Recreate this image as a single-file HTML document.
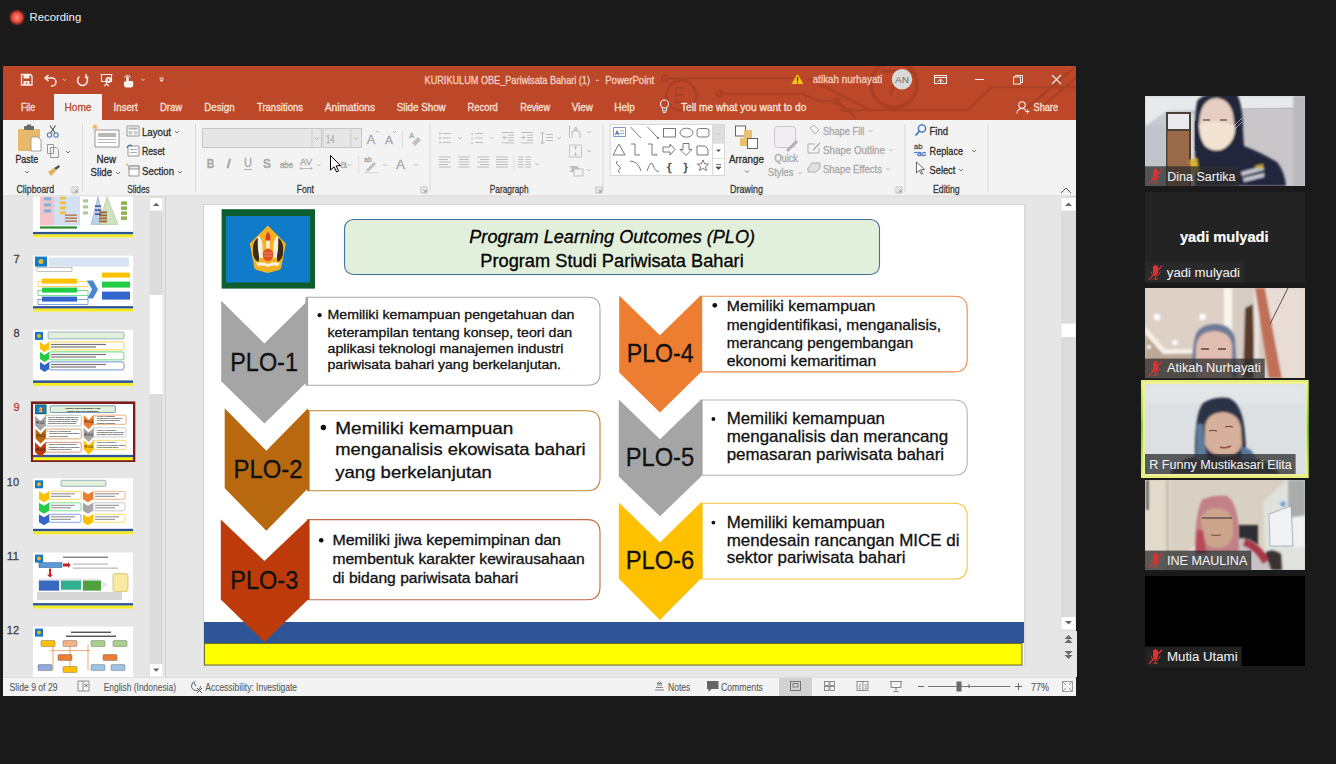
<!DOCTYPE html>
<html><head><meta charset="utf-8"><style>
html,body{margin:0;padding:0;background:#1A1A1A;overflow:hidden;}
svg{display:block;font-family:"Liberation Sans", sans-serif;}
</style></head><body>
<svg width="1336" height="764" viewBox="0 0 1336 764">
<rect x="0" y="0" width="1336" height="764" fill="#1A1A1A" />
<defs><radialGradient id="recg" cx="50%" cy="50%" r="50%"><stop offset="0" stop-color="#FF8A7A"/><stop offset="0.55" stop-color="#E8483A"/><stop offset="0.8" stop-color="#9A2A20" stop-opacity="0.6"/><stop offset="1" stop-color="#1A1A1A" stop-opacity="0"/></radialGradient></defs>
<circle cx="17" cy="17.5" r="9" fill="url(#recg)"/>
<text x="29.6" y="21.0" font-size="11.5" fill="#EDEDED" stroke="#EDEDED" stroke-width="0.05" textLength="51.6" lengthAdjust="spacingAndGlyphs">Recording</text>
<rect x="3" y="66" width="1073" height="630" fill="#E6E6E6" />
<rect x="3" y="66" width="1073" height="54" fill="#BD4829" />
<defs><clipPath id="tbclip"><rect x="3" y="66" width="1073" height="54"/></clipPath></defs>
<g fill="none" stroke="#9E3A20" stroke-width="2.6" opacity="0.55" clip-path="url(#tbclip)">
<path d="M665 78.2 L792 78.2"/>
<circle cx="665" cy="78.2" r="3"/>
<path d="M719.8 93.8 L802.4 93.8 L818.6 101 L836.6 101 L856 118"/>
<circle cx="719.8" cy="93.8" r="3"/><circle cx="836.6" cy="101" r="3"/>
<circle cx="681.2" cy="95.6" r="15" stroke-width="3"/>
<path d="M676 88 h9 M676 88 v14 h9 M676 95 h7" stroke-width="2"/>
<path d="M808 78 L870 110"/>
<circle cx="894" cy="84.5" r="23" stroke-width="4"/>
<path d="M882 71 L900 71 L890 95" stroke-width="3.5"/>
<path d="M840 110 L967 110 L992 87.2 L1076 87.2"/>
<path d="M1027 108 L1076 66"/>
<path d="M1045 104 L1076 78"/>
</g>
<path d="M21.5 74.5 h9 l1.5 1.5 v9 h-10.5 z" fill="none" stroke="#F5F0EE" stroke-width="1.3" />
<rect x="23.5" y="75" width="6" height="3.5" fill="#F5F0EE" />
<rect x="23.5" y="81" width="6" height="4" fill="#F5F0EE" />
<rect x="25.7" y="82.5" width="1.6" height="1.6" fill="#BD4829" />
<path d="M46 78 h6 a4 4 0 0 1 0 8 h-1" fill="none" stroke="#F5F0EE" stroke-width="1.5" />
<path d="M48.5 75 L45 78 L48.5 81" fill="none" stroke="#F5F0EE" stroke-width="1.5" />
<path d="M63 79 l1.5 1.5 l1.5 -1.5" fill="none" stroke="#F5F0EE" stroke-width="0.8" />
<path d="M79.5 76.5 a5 5 0 1 0 6 0" fill="none" stroke="#F5F0EE" stroke-width="1.5" />
<path d="M86.5 74 L85.5 77 L88.5 77.5" fill="none" stroke="#F5F0EE" stroke-width="1.3" />
<path d="M100.5 74.5 h12 M101.5 74.5 v7 h10 v-7 M106.5 81.5 v3 M104 86 l2.5 -2 l2.5 2" fill="none" stroke="#F5F0EE" stroke-width="1.1" />
<circle cx="108.5" cy="80" r="3" fill="#F5F0EE"/>
<path d="M107.8 78.5 l2 1.5 l-2 1.5z" fill="#BD4829" />
<path d="M124.5 77.5 a3.2 3.2 0 0 1 6 0" fill="none" stroke="#F5F0EE" stroke-width="1" />
<rect x="126.2" y="76.5" width="2.6" height="8" fill="#F5F0EE" rx="1.2" />
<path d="M124 81.5 h3 v-0.5 h5 q1.2 0 1.2 1.2 v3 q0 2.3 -2.3 2.3 h-4.6 q-2.3 0 -2.3 -2.3 z" fill="#F5F0EE" />
<path d="M141.5 79 l1.5 1.5 l1.5 -1.5" fill="none" stroke="#F5F0EE" stroke-width="0.8" />
<rect x="159.4" y="77.6" width="4.4" height="0.9" fill="#F5F0EE" />
<path d="M159.4 79.6 h4.4 l-2.2 2.4z" fill="#F5F0EE" />
<text x="424.6" y="83.9" font-size="11.2" fill="#F7D2C2" stroke="#F7D2C2" stroke-width="0.3" textLength="165.4" lengthAdjust="spacingAndGlyphs">KURIKULUM OBE_Pariwisata Bahari (1)</text>
<rect x="595.9" y="79.8" width="3" height="1" fill="#F7D2C2" />
<text x="605.2" y="83.9" font-size="11.2" fill="#F7D2C2" stroke="#F7D2C2" stroke-width="0.3" textLength="49.1" lengthAdjust="spacingAndGlyphs">PowerPoint</text>
<path d="M797.5 74 L803.5 84 L791.5 84 Z" fill="#F5C518" />
<rect x="796.9" y="77" width="1.2" height="4" fill="#3a2a00" />
<rect x="796.9" y="82" width="1.2" height="1.1" fill="#3a2a00" />
<text x="812.8" y="83.2" font-size="11.2" fill="#F7D2C2" stroke="#F7D2C2" stroke-width="0.3" textLength="69.5" lengthAdjust="spacingAndGlyphs">atikah nurhayati</text>
<circle cx="902" cy="79.3" r="10.2" fill="#D9D9D9"/>
<text x="902.0" y="83.0" font-size="9.5" fill="#6A6A6A" stroke="#6A6A6A" stroke-width="0.01" textLength="14.0" lengthAdjust="spacingAndGlyphs" text-anchor="middle">AN</text>
<rect x="934.5" y="75.5" width="12" height="8" fill="none" stroke="#F5F0EE" stroke-width="1" />
<path d="M934.5 77.5 h12" fill="none" stroke="#F5F0EE" stroke-width="1" />
<path d="M937.5 82 l3 -3 l3 3 M940.5 79 v4" fill="none" stroke="#F5F0EE" stroke-width="1" />
<path d="M975 79.5 h9" fill="none" stroke="#F5F0EE" stroke-width="1" />
<rect x="1013.5" y="77" width="7" height="7" fill="none" stroke="#F5F0EE" stroke-width="1" />
<path d="M1015.5 77 v-1.5 h7 v7 h-1.5" fill="none" stroke="#F5F0EE" stroke-width="1" />
<path d="M1052 75 l9 9 M1061 75 l-9 9" fill="none" stroke="#F5F0EE" stroke-width="1.1" />
<rect x="54" y="94" width="48" height="26" fill="#F3F3F3" />
<text x="21.0" y="110.5" font-size="11.2" fill="#FBE3DA" stroke="#FBE3DA" stroke-width="0.3" textLength="14.0" lengthAdjust="spacingAndGlyphs">File</text>
<text x="64.5" y="110.5" font-size="11.2" fill="#B9462A" stroke="#B9462A" stroke-width="0.3" textLength="27.0" lengthAdjust="spacingAndGlyphs">Home</text>
<text x="113.6" y="110.5" font-size="11.2" fill="#FBE3DA" stroke="#FBE3DA" stroke-width="0.3" textLength="24.1" lengthAdjust="spacingAndGlyphs">Insert</text>
<text x="160.0" y="110.5" font-size="11.2" fill="#FBE3DA" stroke="#FBE3DA" stroke-width="0.3" textLength="22.0" lengthAdjust="spacingAndGlyphs">Draw</text>
<text x="204.3" y="110.5" font-size="11.2" fill="#FBE3DA" stroke="#FBE3DA" stroke-width="0.3" textLength="30.3" lengthAdjust="spacingAndGlyphs">Design</text>
<text x="257.0" y="110.5" font-size="11.2" fill="#FBE3DA" stroke="#FBE3DA" stroke-width="0.3" textLength="46.0" lengthAdjust="spacingAndGlyphs">Transitions</text>
<text x="324.8" y="110.5" font-size="11.2" fill="#FBE3DA" stroke="#FBE3DA" stroke-width="0.3" textLength="50.2" lengthAdjust="spacingAndGlyphs">Animations</text>
<text x="396.7" y="110.5" font-size="11.2" fill="#FBE3DA" stroke="#FBE3DA" stroke-width="0.3" textLength="49.0" lengthAdjust="spacingAndGlyphs">Slide Show</text>
<text x="467.6" y="110.5" font-size="11.2" fill="#FBE3DA" stroke="#FBE3DA" stroke-width="0.3" textLength="30.1" lengthAdjust="spacingAndGlyphs">Record</text>
<text x="520.2" y="110.5" font-size="11.2" fill="#FBE3DA" stroke="#FBE3DA" stroke-width="0.3" textLength="29.8" lengthAdjust="spacingAndGlyphs">Review</text>
<text x="571.7" y="110.5" font-size="11.2" fill="#FBE3DA" stroke="#FBE3DA" stroke-width="0.3" textLength="21.0" lengthAdjust="spacingAndGlyphs">View</text>
<text x="614.3" y="110.5" font-size="11.2" fill="#FBE3DA" stroke="#FBE3DA" stroke-width="0.3" textLength="20.5" lengthAdjust="spacingAndGlyphs">Help</text>
<circle cx="664.5" cy="104" r="4" fill="none" stroke="#F5F0EE" stroke-width="1.1"/>
<path d="M662.5 108 v3 h4 v-3 M663 112.5 h3" fill="none" stroke="#F5F0EE" stroke-width="1" />
<text x="681.0" y="110.5" font-size="11.2" fill="#FBE3DA" stroke="#FBE3DA" stroke-width="0.3" textLength="125.3" lengthAdjust="spacingAndGlyphs">Tell me what you want to do</text>
<circle cx="1022" cy="105" r="3.2" fill="none" stroke="#F5F0EE" stroke-width="1.1"/>
<path d="M1017 113.5 a5 5 0 0 1 9 -3 M1025.5 111.5 h4 M1027.5 109.5 v4" fill="none" stroke="#F5F0EE" stroke-width="1.1" />
<text x="1033.6" y="110.5" font-size="11.2" fill="#FBE3DA" stroke="#FBE3DA" stroke-width="0.3" textLength="24.4" lengthAdjust="spacingAndGlyphs">Share</text>
<rect x="3" y="120" width="1073" height="76" fill="#F3F3F3" />
<rect x="3" y="195.5" width="1073" height="1" fill="#D4D4D4" />
<rect x="82" y="124" width="1" height="68" fill="#D9D9D9" />
<rect x="195" y="124" width="1" height="68" fill="#D9D9D9" />
<rect x="429.5" y="124" width="1" height="68" fill="#D9D9D9" />
<rect x="602.5" y="124" width="1" height="68" fill="#D9D9D9" />
<rect x="904.4" y="124" width="1" height="68" fill="#D9D9D9" />
<rect x="987.5" y="124" width="1" height="68" fill="#D9D9D9" />
<path d="M18 129 h22 v22 h-22 z" fill="#E8B96A" />
<rect x="24" y="126" width="10" height="4" fill="#6A6A6A" rx="1" />
<rect x="27" y="124.5" width="4" height="3" fill="#6A6A6A" />
<path d="M31 137 h7 l3 3 v11 h-10 z" fill="#FFFFFF" stroke="#8A8A8A" stroke-width="0.8" />
<text x="15.4" y="163.0" font-size="11.2" fill="#2B2B2B" stroke="#2B2B2B" stroke-width="0.3" textLength="22.8" lengthAdjust="spacingAndGlyphs">Paste</text>
<path d="M25 171 l2 2 l2 -2" fill="none" stroke="#666" stroke-width="0.9" />
<g fill="none" stroke="#4A7EBB" stroke-width="1.1"><circle cx="49.5" cy="135" r="2.2"/><circle cx="56" cy="135" r="2.2"/></g>
<path d="M50.5 133 L55.5 125.5 M55 133 L50 125.5" fill="none" stroke="#555" stroke-width="1.1" />
<path d="M47.5 144.5 h6 v9 h-6 z M50.5 147.5 h6 l2 2 v8 h-8 z" fill="#F3F3F3" stroke="#8E8E8E" stroke-width="0.9" />
<path d="M66 151 l2 2 l2 -2" fill="none" stroke="#666" stroke-width="0.9" />
<path d="M48 172 l6 -4 l2 3 l-5 5 z" fill="#E0B05A" />
<path d="M54 168 l5 -3 l1 2 l-4 3 z" fill="#555" />
<text x="16.5" y="192.6" font-size="11" fill="#3B3B3B" stroke="#3B3B3B" stroke-width="0.3" textLength="37.7" lengthAdjust="spacingAndGlyphs">Clipboard</text>
<path d="M72 187 h6 v6 h-6 z" fill="none" stroke="#B0B0B0" stroke-width="0.8" />
<path d="M74 189 l3 3 m0 -2.5 v2.5 h-2.5" fill="none" stroke="#8A8A8A" stroke-width="0.8" />
<path d="M95 130 h24 v17 h-24 z" fill="#FFFFFF" stroke="#8A8A8A" stroke-width="0.9" />
<rect x="98" y="133" width="18" height="4" fill="#B8B8B8" />
<rect x="98" y="139" width="18" height="1" fill="#B8B8B8" />
<rect x="98" y="142" width="18" height="1" fill="#B8B8B8" />
<path d="M95 124 l0 6 M92 127 h6 M93 125 l4 4 M97 125 l-4 4" fill="none" stroke="#F0B040" stroke-width="0.9" />
<text x="96.5" y="163.0" font-size="11.2" fill="#2B2B2B" stroke="#2B2B2B" stroke-width="0.3" textLength="19.5" lengthAdjust="spacingAndGlyphs">New</text>
<text x="90.6" y="176.4" font-size="11.2" fill="#2B2B2B" stroke="#2B2B2B" stroke-width="0.3" textLength="21.4" lengthAdjust="spacingAndGlyphs">Slide</text>
<path d="M116 172 l2 2 l2 -2" fill="none" stroke="#666" stroke-width="0.9" />
<path d="M127 126 h12 v10 h-12 z" fill="#FFFFFF" stroke="#8A8A8A" stroke-width="0.9" />
<rect x="128.5" y="127.5" width="9" height="2" fill="#B0B0B0" />
<rect x="128.5" y="131" width="4" height="3.5" fill="#C8C8C8" />
<rect x="134" y="131" width="3.5" height="3.5" fill="#C8C8C8" />
<text x="142.0" y="135.5" font-size="11.2" fill="#2B2B2B" stroke="#2B2B2B" stroke-width="0.3" textLength="29.0" lengthAdjust="spacingAndGlyphs">Layout</text>
<path d="M175 131 l2 2 l2 -2" fill="none" stroke="#666" stroke-width="0.9" />
<path d="M128 146 h11 v10 h-11 z" fill="#FFFFFF" stroke="#8A8A8A" stroke-width="0.9" />
<rect x="130" y="149" width="7" height="1" fill="#AAA" />
<rect x="130" y="152" width="7" height="1" fill="#AAA" />
<path d="M127 148 a3 3 0 0 1 5 -2" fill="none" stroke="#2F6FC0" stroke-width="1.2" />
<text x="142.0" y="155.0" font-size="11.2" fill="#2B2B2B" stroke="#2B2B2B" stroke-width="0.3" textLength="22.7" lengthAdjust="spacingAndGlyphs">Reset</text>
<path d="M129 166 h10 v10 h-10 z" fill="#FFFFFF" stroke="#8A8A8A" stroke-width="0.9" />
<rect x="129" y="166" width="10" height="3" fill="#E9E9E9" stroke="#8A8A8A" stroke-width="0.9" />
<path d="M126 164 l2 2 M127 163 v3" fill="none" stroke="#F0B040" stroke-width="0.8" />
<text x="142.0" y="175.0" font-size="11.2" fill="#2B2B2B" stroke="#2B2B2B" stroke-width="0.3" textLength="32.0" lengthAdjust="spacingAndGlyphs">Section</text>
<path d="M178 171 l2 2 l2 -2" fill="none" stroke="#666" stroke-width="0.9" />
<text x="127.2" y="192.6" font-size="11" fill="#3B3B3B" stroke="#3B3B3B" stroke-width="0.3" textLength="22.5" lengthAdjust="spacingAndGlyphs">Slides</text>
<rect x="202.5" y="128.5" width="119" height="19" fill="#E6E6E6" stroke="#C4C4C4" stroke-width="0.9" />
<rect x="311.6" y="129" width="0.8" height="18" fill="#C4C4C4" />
<path d="M314.5 137.5 l2 2 l2 -2" fill="none" stroke="#B0B0B0" stroke-width="0.9" />
<rect x="323" y="128.5" width="38.6" height="19" fill="#E6E6E6" stroke="#C4C4C4" stroke-width="0.9" />
<rect x="350.5" y="129" width="0.8" height="18" fill="#C4C4C4" />
<path d="M354 137.5 l2 2 l2 -2" fill="none" stroke="#B0B0B0" stroke-width="0.9" />
<text x="326.0" y="142.5" font-size="11" fill="#B0B0B0" stroke="#B0B0B0" stroke-width="0.3" textLength="8.5" lengthAdjust="spacingAndGlyphs">14</text>
<text x="366.8" y="144.0" font-size="13" fill="#A8A8A8" stroke="#A8A8A8" stroke-width="0.3" textLength="8.5" lengthAdjust="spacingAndGlyphs">A</text>
<path d="M376 132.5 l1.5 -1.5 l1.5 1.5" fill="none" stroke="#A8A8A8" stroke-width="0.9" />
<text x="385.0" y="144.0" font-size="11" fill="#A8A8A8" stroke="#A8A8A8" stroke-width="0.3" textLength="8.0" lengthAdjust="spacingAndGlyphs">A</text>
<path d="M393 131 l1.5 1.5 l1.5 -1.5" fill="none" stroke="#A8A8A8" stroke-width="0.9" />
<rect x="402" y="130" width="0.8" height="18" fill="#DADADA" />
<text x="409.0" y="138.0" font-size="8" fill="#A8A8A8" stroke="#A8A8A8" stroke-width="0.3">A</text>
<path d="M412 143 l6 -6 l3 3 l-6 6 z" fill="#C0C0C0" />
<text x="206.8" y="168.0" font-size="12" fill="#A8A8A8" stroke="#A8A8A8" stroke-width="0.3" textLength="7.5" lengthAdjust="spacingAndGlyphs" font-weight="bold">B</text>
<text x="226.0" y="168.0" font-size="12" fill="#A8A8A8" stroke="#A8A8A8" stroke-width="0.3" textLength="5.0" lengthAdjust="spacingAndGlyphs" font-style="italic">I</text>
<text x="244.0" y="167.0" font-size="12" fill="#A8A8A8" stroke="#A8A8A8" stroke-width="0.3" textLength="8.0" lengthAdjust="spacingAndGlyphs">U</text>
<rect x="244" y="169" width="8" height="0.9" fill="#A8A8A8" />
<text x="263.0" y="168.0" font-size="12" fill="#A8A8A8" stroke="#A8A8A8" stroke-width="0.3" textLength="8.0" lengthAdjust="spacingAndGlyphs" font-weight="bold">S</text>
<text x="280.0" y="167.5" font-size="9.5" fill="#A8A8A8" stroke="#A8A8A8" stroke-width="0.3" textLength="13.0" lengthAdjust="spacingAndGlyphs">abe</text>
<rect x="280" y="164" width="13" height="0.8" fill="#A8A8A8" />
<text x="300.0" y="165.0" font-size="9.5" fill="#A8A8A8" stroke="#A8A8A8" stroke-width="0.3" textLength="12.0" lengthAdjust="spacingAndGlyphs">AV</text>
<path d="M300 168.5 h12 M301.5 167 l-1.5 1.5 l1.5 1.5 M310.5 167 l1.5 1.5 l-1.5 1.5" fill="none" stroke="#A8A8A8" stroke-width="0.8" />
<path d="M316.5 164 l2 2 l2 -2" fill="none" stroke="#B8B8B8" stroke-width="0.9" />
<text x="340.0" y="168.0" font-size="11" fill="#A8A8A8" stroke="#A8A8A8" stroke-width="0.3" textLength="7.0" lengthAdjust="spacingAndGlyphs">a</text>
<path d="M347.5 164 l2 2 l2 -2" fill="none" stroke="#B8B8B8" stroke-width="0.9" />
<rect x="358.4" y="156" width="0.8" height="18" fill="#DADADA" />
<text x="364.0" y="162.0" font-size="7" fill="#A8A8A8" stroke="#A8A8A8" stroke-width="0.3" textLength="8.0" lengthAdjust="spacingAndGlyphs">ab</text>
<path d="M366 170 l8 -8 l2 2 l-8 8 z" fill="#BDBDBD" />
<rect x="364" y="172" width="14" height="1.2" fill="#D8D8D8" />
<path d="M383 164 l2 2 l2 -2" fill="none" stroke="#B8B8B8" stroke-width="0.9" />
<text x="396.0" y="169.0" font-size="13" fill="#A8A8A8" stroke="#A8A8A8" stroke-width="0.3" textLength="9.0" lengthAdjust="spacingAndGlyphs">A</text>
<path d="M414 164 l2 2 l2 -2" fill="none" stroke="#B8B8B8" stroke-width="0.9" />
<text x="296.7" y="192.6" font-size="11" fill="#3B3B3B" stroke="#3B3B3B" stroke-width="0.3" textLength="17.2" lengthAdjust="spacingAndGlyphs">Font</text>
<path d="M421 187 h6 v6 h-6 z" fill="none" stroke="#B0B0B0" stroke-width="0.8" />
<path d="M423 189 l3 3 m0 -2.5 v2.5 h-2.5" fill="none" stroke="#8A8A8A" stroke-width="0.8" />
<path d="M330.5 155.5 L330.5 170 L334 166.8 L336.6 172 L338.6 171 L336 166 L340.5 165.5 Z" fill="#FFFFFF" stroke="#000" stroke-width="1" />
<circle cx="440.0" cy="133.5" r="1.1" fill="#BDBDBD"/>
<rect x="442.5" y="133.0" width="8" height="1" fill="#BDBDBD" />
<circle cx="440.0" cy="138.0" r="1.1" fill="#BDBDBD"/>
<rect x="442.5" y="137.5" width="8" height="1" fill="#BDBDBD" />
<circle cx="440.0" cy="142.5" r="1.1" fill="#BDBDBD"/>
<rect x="442.5" y="142.0" width="8" height="1" fill="#BDBDBD" />
<path d="M458 137 l2 2 l2 -2" fill="none" stroke="#B8B8B8" stroke-width="0.9" />
<rect x="471.5" y="133.0" width="1.2" height="2" fill="#BDBDBD" />
<rect x="475" y="133.0" width="8" height="1" fill="#BDBDBD" />
<rect x="471.5" y="137.5" width="1.2" height="2" fill="#BDBDBD" />
<rect x="475" y="137.5" width="8" height="1" fill="#BDBDBD" />
<rect x="471.5" y="142.0" width="1.2" height="2" fill="#BDBDBD" />
<rect x="475" y="142.0" width="8" height="1" fill="#BDBDBD" />
<path d="M489.5 137 l2 2 l2 -2" fill="none" stroke="#B8B8B8" stroke-width="0.9" />
<rect x="502" y="132.0" width="12" height="1" fill="#BDBDBD" />
<rect x="508" y="134.6" width="6" height="1" fill="#BDBDBD" />
<rect x="508" y="137.2" width="6" height="1" fill="#BDBDBD" />
<rect x="508" y="139.8" width="6" height="1" fill="#BDBDBD" />
<rect x="502" y="142.4" width="12" height="1" fill="#BDBDBD" />
<path d="M507 137.5 l-4 0 m2 -2 l-2 2 l2 2" fill="none" stroke="#BDBDBD" stroke-width="1" />
<rect x="521" y="132.0" width="12" height="1" fill="#BDBDBD" />
<rect x="527" y="134.6" width="6" height="1" fill="#BDBDBD" />
<rect x="527" y="137.2" width="6" height="1" fill="#BDBDBD" />
<rect x="527" y="139.8" width="6" height="1" fill="#BDBDBD" />
<rect x="521" y="142.4" width="12" height="1" fill="#BDBDBD" />
<path d="M521 137.5 l4 0 m-2 -2 l2 2 l-2 2" fill="none" stroke="#BDBDBD" stroke-width="1" />
<path d="M542.5 132 v12 M540.5 134 l2 -2 l2 2 M540.5 142 l2 2 l2 -2" fill="none" stroke="#BDBDBD" stroke-width="1" />
<rect x="546" y="134" width="7" height="1" fill="#BDBDBD" />
<rect x="546" y="137" width="7" height="1" fill="#BDBDBD" />
<rect x="546" y="140" width="7" height="1" fill="#BDBDBD" />
<path d="M557 137 l2 2 l2 -2" fill="none" stroke="#B8B8B8" stroke-width="0.9" />
<text x="573.0" y="131.5" font-size="8" fill="#BDBDBD" stroke="#BDBDBD" stroke-width="0.3">A</text>
<path d="M569.5 126 v12 M572 131 v7 M580 131 v7" fill="none" stroke="#BDBDBD" stroke-width="1" />
<path d="M587 131 l2 2 l2 -2" fill="none" stroke="#B8B8B8" stroke-width="0.9" />
<rect x="439" y="156.5" width="12" height="1" fill="#BDBDBD" />
<rect x="439" y="159.0" width="9" height="1" fill="#BDBDBD" />
<rect x="439" y="161.5" width="12" height="1" fill="#BDBDBD" />
<rect x="439" y="164.0" width="9" height="1" fill="#BDBDBD" />
<rect x="439" y="166.5" width="12" height="1" fill="#BDBDBD" />
<rect x="458.0" y="156.5" width="12" height="1" fill="#BDBDBD" />
<rect x="459.5" y="159.0" width="9" height="1" fill="#BDBDBD" />
<rect x="458.0" y="161.5" width="12" height="1" fill="#BDBDBD" />
<rect x="459.5" y="164.0" width="9" height="1" fill="#BDBDBD" />
<rect x="458.0" y="166.5" width="12" height="1" fill="#BDBDBD" />
<rect x="477" y="156.5" width="12" height="1" fill="#BDBDBD" />
<rect x="480" y="159.0" width="9" height="1" fill="#BDBDBD" />
<rect x="477" y="161.5" width="12" height="1" fill="#BDBDBD" />
<rect x="480" y="164.0" width="9" height="1" fill="#BDBDBD" />
<rect x="477" y="166.5" width="12" height="1" fill="#BDBDBD" />
<rect x="496" y="156.5" width="12" height="1" fill="#BDBDBD" />
<rect x="496" y="159.0" width="12" height="1" fill="#BDBDBD" />
<rect x="496" y="161.5" width="12" height="1" fill="#BDBDBD" />
<rect x="496" y="164.0" width="12" height="1" fill="#BDBDBD" />
<rect x="496" y="166.5" width="12" height="1" fill="#BDBDBD" />
<rect x="513.5" y="155" width="0.8" height="17" fill="#DADADA" />
<rect x="518" y="156.5" width="5.5" height="1" fill="#BDBDBD" />
<rect x="525.5" y="156.5" width="5.5" height="1" fill="#BDBDBD" />
<rect x="518" y="159.0" width="5.5" height="1" fill="#BDBDBD" />
<rect x="525.5" y="159.0" width="5.5" height="1" fill="#BDBDBD" />
<rect x="518" y="161.5" width="5.5" height="1" fill="#BDBDBD" />
<rect x="525.5" y="161.5" width="5.5" height="1" fill="#BDBDBD" />
<rect x="518" y="164.0" width="5.5" height="1" fill="#BDBDBD" />
<rect x="525.5" y="164.0" width="5.5" height="1" fill="#BDBDBD" />
<rect x="518" y="166.5" width="5.5" height="1" fill="#BDBDBD" />
<rect x="525.5" y="166.5" width="5.5" height="1" fill="#BDBDBD" />
<path d="M535 163 l2 2 l2 -2" fill="none" stroke="#B8B8B8" stroke-width="0.9" />
<path d="M569.5 145 h12 v12 h-12 z" fill="none" stroke="#BDBDBD" stroke-width="0.9" />
<path d="M575.5 146 v4 m-2 -2 l2 -2 l2 2 M575.5 156 v-4 m-2 2 l2 2 l2 -2" fill="none" stroke="#BDBDBD" stroke-width="0.9" />
<path d="M587 150 l2 2 l2 -2" fill="none" stroke="#B8B8B8" stroke-width="0.9" />
<path d="M569 166 h8 l3 3 l-3 3 h-8 l3 -3 z" fill="#BDBDBD" />
<rect x="574" y="169" width="9" height="7" fill="#F3F3F3" stroke="#BDBDBD" stroke-width="0.9" />
<path d="M587 169 l2 2 l2 -2" fill="none" stroke="#B8B8B8" stroke-width="0.9" />
<text x="489.7" y="192.6" font-size="11" fill="#3B3B3B" stroke="#3B3B3B" stroke-width="0.3" textLength="38.9" lengthAdjust="spacingAndGlyphs">Paragraph</text>
<path d="M596 187 h6 v6 h-6 z" fill="none" stroke="#B0B0B0" stroke-width="0.8" />
<path d="M598 189 l3 3 m0 -2.5 v2.5 h-2.5" fill="none" stroke="#8A8A8A" stroke-width="0.8" />
<rect x="610.2" y="124.5" width="114.3" height="50.9" fill="#FFFFFF" stroke="#D4D4D4" stroke-width="0.9" />
<rect x="712.6" y="124.5" width="11.9" height="50.9" fill="#FFFFFF" stroke="#D4D4D4" stroke-width="0.9" />
<rect x="713" y="125" width="11" height="18" fill="#DEDEDE" />
<rect x="712.6" y="143" width="11.9" height="0.8" fill="#E0E0E0" />
<rect x="712.6" y="158" width="11.9" height="0.8" fill="#D4D4D4" />
<rect x="716.5" y="133.5" width="4" height="0.8" fill="#BBBBBB" />
<path d="M716 149.5 l2.5 2.5 l2.5 -2.5 z" fill="#555" />
<path d="M716 164.5 h5 M716 167 l2.5 2.5 l2.5 -2.5 z" fill="#555" stroke="#555" stroke-width="0.8" />
<path d="M613.5 127.5 h12 v9 h-12 z" fill="#FFFFFF" stroke="#6E8FC0" stroke-width="0.9" />
<text x="615.0" y="134.5" font-size="6" fill="#2F5597" stroke="#2F5597" stroke-width="0.3">A</text>
<rect x="620" y="130.5" width="4" height="0.8" fill="#999" />
<rect x="620" y="133" width="4" height="0.8" fill="#999" />
<path d="M630.5 127 L641 138" fill="none" stroke="#6A6A6A" stroke-width="0.9" />
<path d="M647.5 127 L657.5 137.5" fill="none" stroke="#6A6A6A" stroke-width="0.9" />
<circle cx="658" cy="138" r="0.9" fill="#444"/>
<rect x="663.5" y="128.5" width="12" height="8.5" fill="none" stroke="#6A6A6A" stroke-width="0.9" />
<ellipse cx="686.5" cy="132.7" rx="6.5" ry="4.5" fill="none" stroke="#6A6A6A" stroke-width="0.9"/>
<rect x="697" y="128.5" width="12" height="8.5" fill="none" stroke="#6A6A6A" stroke-width="0.9" rx="2.5" />
<path d="M619 144 L625 155 L613 155 Z" fill="none" stroke="#6A6A6A" stroke-width="0.9" />
<path d="M631 144 h4 v11 h5" fill="none" stroke="#6A6A6A" stroke-width="0.9" />
<path d="M648 144 h4 v11 h5 l-1.5 -1.5" fill="none" stroke="#6A6A6A" stroke-width="0.9" />
<path d="M663 147 h7 v-3 l5 5.5 l-5 5.5 v-3 h-7 z" fill="none" stroke="#6A6A6A" stroke-width="0.9" />
<path d="M683 143.5 h6 v6 h3 l-6 6 l-6 -6 h3 z" fill="none" stroke="#6A6A6A" stroke-width="0.9" />
<path d="M697 146 h5 a5 5 0 0 1 6 5 v4 h-11 z" fill="none" stroke="#6A6A6A" stroke-width="0.9" />
<path d="M617 161 q-2 3 2 5 q3 2 0 4 q-2 1 1 3" fill="none" stroke="#6A6A6A" stroke-width="0.9" />
<path d="M630 161 q8 0 11 10" fill="none" stroke="#6A6A6A" stroke-width="0.9" />
<path d="M647 171 q4 -12 6 -6 q3 8 6 6" fill="none" stroke="#6A6A6A" stroke-width="0.9" />
<text x="667.0" y="170.5" font-size="11" fill="#444" stroke="#444" stroke-width="0.3" textLength="4.5" lengthAdjust="spacingAndGlyphs">{</text>
<text x="683.5" y="170.5" font-size="11" fill="#444" stroke="#444" stroke-width="0.3" textLength="4.5" lengthAdjust="spacingAndGlyphs">}</text>
<path d="M703 160 l1.6 3.8 l4 0.3 l-3.1 2.6 l1 3.9 l-3.5 -2.2 l-3.5 2.2 l1 -3.9 l-3.1 -2.6 l4 -0.3 z" fill="none" stroke="#6A6A6A" stroke-width="0.9" />
<rect x="735.5" y="126" width="10" height="10" fill="#FFFFFF" stroke="#555" stroke-width="0.9" />
<rect x="744" y="130" width="8" height="8" fill="#E8C070" />
<rect x="740" y="138" width="8" height="8" fill="#E8C070" />
<rect x="747.5" y="138.5" width="10" height="10" fill="#FFFFFF" stroke="#555" stroke-width="0.9" />
<text x="729.0" y="162.7" font-size="11.2" fill="#2B2B2B" stroke="#2B2B2B" stroke-width="0.3" textLength="35.0" lengthAdjust="spacingAndGlyphs">Arrange</text>
<path d="M745 170.5 l2 2 l2 -2" fill="none" stroke="#666" stroke-width="0.9" />
<rect x="774.5" y="126.5" width="21" height="21" fill="#F2EDF2" stroke="#C8C0C8" stroke-width="0.9" rx="3" />
<path d="M786 150 l10 -10 l2 2 l-10 10 z" fill="#B0B0B0" />
<text x="774.4" y="162.3" font-size="11" fill="#A8A8A8" stroke="#A8A8A8" stroke-width="0.3" textLength="23.6" lengthAdjust="spacingAndGlyphs">Quick</text>
<text x="768.0" y="176.3" font-size="11" fill="#A8A8A8" stroke="#A8A8A8" stroke-width="0.3" textLength="25.5" lengthAdjust="spacingAndGlyphs">Styles</text>
<path d="M798 172 l2 2 l2 -2" fill="none" stroke="#B8B8B8" stroke-width="0.9" />
<path d="M810 128 l4 -3 l5 5 l-4 4 z" fill="none" stroke="#A8A8A8" stroke-width="0.9" />
<text x="823.0" y="135.0" font-size="10.8" fill="#A8A8A8" stroke="#A8A8A8" stroke-width="0.3" textLength="41.4" lengthAdjust="spacingAndGlyphs">Shape Fill</text>
<path d="M868.5 130 l2 2 l2 -2" fill="none" stroke="#B8B8B8" stroke-width="0.9" />
<path d="M808 144 h7 M808 144 v9 h11 v-5" fill="none" stroke="#A8A8A8" stroke-width="0.9" />
<path d="M813 150 l7 -7" fill="none" stroke="#A8A8A8" stroke-width="1.2" />
<text x="823.0" y="154.0" font-size="10.8" fill="#A8A8A8" stroke="#A8A8A8" stroke-width="0.3" textLength="62.0" lengthAdjust="spacingAndGlyphs">Shape Outline</text>
<path d="M889 149 l2 2 l2 -2" fill="none" stroke="#B8B8B8" stroke-width="0.9" />
<path d="M808 168 l4 -5 h8 v5 l-4 4 h-8 z" fill="#E0E0E0" stroke="#A8A8A8" stroke-width="0.9" />
<text x="823.0" y="173.0" font-size="10.8" fill="#A8A8A8" stroke="#A8A8A8" stroke-width="0.3" textLength="59.0" lengthAdjust="spacingAndGlyphs">Shape Effects</text>
<path d="M886 168 l2 2 l2 -2" fill="none" stroke="#B8B8B8" stroke-width="0.9" />
<text x="730.0" y="192.6" font-size="11" fill="#3B3B3B" stroke="#3B3B3B" stroke-width="0.3" textLength="33.0" lengthAdjust="spacingAndGlyphs">Drawing</text>
<path d="M896 187 h6 v6 h-6 z" fill="none" stroke="#B0B0B0" stroke-width="0.8" />
<path d="M898 189 l3 3 m0 -2.5 v2.5 h-2.5" fill="none" stroke="#8A8A8A" stroke-width="0.8" />
<circle cx="922" cy="128.5" r="3.6" fill="none" stroke="#2F6FC0" stroke-width="1.3"/>
<path d="M919.5 131 L915.5 135.5" fill="none" stroke="#2F6FC0" stroke-width="1.5" />
<text x="929.6" y="135.0" font-size="11.2" fill="#2B2B2B" stroke="#2B2B2B" stroke-width="0.3" textLength="18.4" lengthAdjust="spacingAndGlyphs">Find</text>
<text x="914.0" y="149.0" font-size="8" fill="#555" stroke="#555" stroke-width="0.3" textLength="8.5" lengthAdjust="spacingAndGlyphs">ab</text>
<text x="917.0" y="156.0" font-size="8" fill="#2F6FC0" stroke="#2F6FC0" stroke-width="0.3" textLength="9.0" lengthAdjust="spacingAndGlyphs">ac</text>
<path d="M914 152.5 h3 m-1 -1 l1 1 l-1 1" fill="none" stroke="#2F6FC0" stroke-width="0.8" />
<text x="929.6" y="154.5" font-size="11.2" fill="#2B2B2B" stroke="#2B2B2B" stroke-width="0.3" textLength="33.4" lengthAdjust="spacingAndGlyphs">Replace</text>
<path d="M972 150 l2 2 l2 -2" fill="none" stroke="#666" stroke-width="0.9" />
<path d="M916.5 162 v11 l2.8 -2.7 l2 4 l1.4 -0.7 l-2 -4 h3.8 z" fill="#FFFFFF" stroke="#555" stroke-width="0.9" />
<text x="929.6" y="173.5" font-size="11.2" fill="#2B2B2B" stroke="#2B2B2B" stroke-width="0.3" textLength="25.7" lengthAdjust="spacingAndGlyphs">Select</text>
<path d="M959 169 l2 2 l2 -2" fill="none" stroke="#666" stroke-width="0.9" />
<text x="933.0" y="192.6" font-size="11" fill="#3B3B3B" stroke="#3B3B3B" stroke-width="0.3" textLength="26.7" lengthAdjust="spacingAndGlyphs">Editing</text>
<path d="M1061 193 l5 -5 l5 5" fill="none" stroke="#555" stroke-width="1" />
<rect x="3" y="196.5" width="162" height="480.5" fill="#E6E6E6" />
<rect x="165" y="196.5" width="1" height="480.5" fill="#D0D0D0" />
<rect x="166" y="196.5" width="910" height="480.5" fill="#E6E6E6" />
<svg x="0" y="196.5" width="150" height="480.5" viewBox="0 196.5 150 480.5" overflow="hidden">
<rect x="33" y="181.4" width="100" height="56" fill="#FFFFFF" />
<rect x="33" y="231.9" width="100" height="2.6" fill="#2F5597" />
<rect x="33" y="234.4" width="100" height="3" fill="#F2EA2A" />
<rect x="40" y="191.4" width="14" height="34" fill="#F2C4CA" />
<rect x="54" y="191.4" width="26" height="34" fill="#D2E0F2" />
<rect x="44" y="197.4" width="7" height="3" fill="#7FB0D8" />
<rect x="44" y="203.4" width="7" height="3" fill="#7FB0D8" />
<rect x="44" y="209.4" width="7" height="3" fill="#7FB0D8" />
<rect x="60" y="196.4" width="6" height="3" fill="#F0C040" />
<rect x="60" y="201.4" width="6" height="3" fill="#F0C040" />
<rect x="60" y="206.4" width="6" height="3" fill="#F0C040" />
<rect x="60" y="211.4" width="6" height="3" fill="#F0C040" />
<rect x="65" y="214.4" width="12" height="1.5" fill="#C07850" />
<rect x="65" y="217.4" width="12" height="1.5" fill="#C07850" />
<rect x="65" y="220.4" width="12" height="1.5" fill="#C07850" />
<rect x="40" y="226.4" width="37" height="2.2" fill="#2E8B2E" />
<path d="M91 224.4 L98 196.4 L105 224.4 Z" fill="#BCD0EC" stroke="#7090C0" stroke-width="0.4" />
<path d="M99 224.4 L107 196.4 L118 224.4 Z" fill="#CFE3C0" stroke="#90B070" stroke-width="0.4" />
<rect x="99" y="211.4" width="8" height="2" fill="#A06A40" />
<rect x="99" y="214.4" width="8" height="2" fill="#A06A40" />
<rect x="99" y="217.4" width="8" height="2" fill="#A06A40" />
<rect x="99" y="220.4" width="8" height="2" fill="#A06A40" />
<rect x="95" y="205.4" width="6" height="1.5" fill="#445588" />
<rect x="95" y="209.4" width="6" height="1.5" fill="#445588" />
<rect x="95" y="213.4" width="6" height="1.5" fill="#445588" />
<rect x="121" y="201.4" width="6" height="3.5" fill="#8DB050" />
<rect x="121" y="206.4" width="6" height="3.5" fill="#8DB050" />
<rect x="121" y="211.4" width="6" height="3.5" fill="#8DB050" />
<rect x="121" y="216.4" width="6" height="3.5" fill="#8DB050" />
<rect x="83" y="199.4" width="5" height="3" fill="#A9C890" />
<rect x="83" y="205.4" width="5" height="3" fill="#A9C890" />
<rect x="83" y="211.4" width="5" height="3" fill="#A9C890" />
<rect x="33" y="255.6" width="100" height="56" fill="#FFFFFF" />
<rect x="33" y="306.1" width="100" height="2.6" fill="#2F5597" />
<rect x="33" y="308.6" width="100" height="3" fill="#F2EA2A" />
<rect x="35" y="256.6" width="12" height="10" fill="#0F7BC9" />
<circle cx="41" cy="261.6" r="2.5" fill="#F2B320"/>
<rect x="49" y="257.6" width="80" height="9" fill="#D8E4F4" />
<rect x="37" y="267.6" width="35" height="4" fill="#FFFFFF" stroke="#888" stroke-width="0.5" />
<rect x="42" y="278.6" width="35" height="5" fill="#FFC000" />
<rect x="38" y="281.6" width="50" height="5" fill="none" stroke="#FFC000" stroke-width="0.6" />
<rect x="42" y="287.6" width="35" height="5" fill="#22CC44" />
<rect x="38" y="290.6" width="50" height="5" fill="none" stroke="#22CC44" stroke-width="0.6" />
<rect x="42" y="296.6" width="35" height="5" fill="#3366CC" />
<rect x="38" y="299.6" width="50" height="5" fill="none" stroke="#3366CC" stroke-width="0.6" />
<path d="M87 280.6 l6 0 l5 9 l-5 9 l-6 0 l5 -9 z" fill="#4A86D0" />
<rect x="102" y="272.6" width="28" height="5" fill="#FFC000" />
<rect x="102" y="281.6" width="28" height="6" fill="#22CC44" />
<rect x="102" y="291.6" width="28" height="8" fill="#3366CC" />
<text x="13.6" y="263.0" font-size="11.5" fill="#444" stroke="#444" stroke-width="0.3" textLength="6.1" lengthAdjust="spacingAndGlyphs">7</text>
<rect x="33" y="329.9" width="100" height="56" fill="#FFFFFF" />
<rect x="33" y="380.4" width="100" height="2.6" fill="#2F5597" />
<rect x="33" y="382.9" width="100" height="3" fill="#F2EA2A" />
<rect x="35" y="331.9" width="8" height="8" fill="#0F7BC9" />
<circle cx="39" cy="335.9" r="2" fill="#F2B320"/>
<rect x="48" y="331.9" width="76" height="7" fill="#E2EFDA" stroke="#44729D" stroke-width="0.5" rx="1.5" />
<path d="M40 341.9 l4.5 3 l4.5 -3 v7 l-4.5 3 l-4.5 -3 z" fill="#FFC000" />
<rect x="49" y="341.9" width="75" height="8" fill="#FFFFFF" stroke="#FFC000" stroke-width="0.7" rx="2" />
<rect x="51" y="343.9" width="55" height="1.2" fill="#777" />
<rect x="51" y="346.4" width="45" height="1.2" fill="#777" />
<path d="M40 351.9 l4.5 3 l4.5 -3 v7 l-4.5 3 l-4.5 -3 z" fill="#22CC44" />
<rect x="49" y="351.9" width="75" height="8" fill="#FFFFFF" stroke="#22CC44" stroke-width="0.7" rx="2" />
<rect x="51" y="353.9" width="55" height="1.2" fill="#777" />
<rect x="51" y="356.4" width="45" height="1.2" fill="#777" />
<path d="M40 361.9 l4.5 3 l4.5 -3 v7 l-4.5 3 l-4.5 -3 z" fill="#3366CC" />
<rect x="49" y="361.9" width="75" height="8" fill="#FFFFFF" stroke="#3366CC" stroke-width="0.7" rx="2" />
<rect x="51" y="363.9" width="55" height="1.2" fill="#777" />
<rect x="51" y="366.4" width="45" height="1.2" fill="#777" />
<text x="13.6" y="337.3" font-size="11.5" fill="#444" stroke="#444" stroke-width="0.3" textLength="6.1" lengthAdjust="spacingAndGlyphs">8</text>
<rect x="30.9" y="401.4" width="104.4" height="60.6" fill="#7A1C1C" />
<rect x="33" y="404" width="100" height="56" fill="#FFFFFF" />
<use href="#slide" stroke-width="0.7" transform="translate(33 404) scale(0.12195) translate(-204 -205)"/>
<text x="13.6" y="411.4" font-size="11.5" fill="#C0392B" stroke="#C0392B" stroke-width="0.3" textLength="6.1" lengthAdjust="spacingAndGlyphs">9</text>
<rect x="33" y="478.3" width="100" height="56" fill="#FFFFFF" />
<rect x="33" y="528.8" width="100" height="2.6" fill="#2F5597" />
<rect x="33" y="531.3" width="100" height="3" fill="#F2EA2A" />
<rect x="35" y="480.3" width="8" height="8" fill="#0F7BC9" />
<circle cx="39" cy="484.3" r="2" fill="#F2B320"/>
<rect x="61" y="480.3" width="45" height="6" fill="#E2EFDA" stroke="#44729D" stroke-width="0.5" rx="1.5" />
<path d="M39 491.3 l5 3 l5 -3 v8 l-5 3 l-5 -3 z" fill="#FFC000" />
<rect x="49" y="491.3" width="32" height="8" fill="#FFFFFF" stroke="#FFC000" stroke-width="0.6" rx="2" />
<rect x="51" y="493.3" width="24" height="1" fill="#888" />
<rect x="51" y="495.8" width="20" height="1" fill="#888" />
<path d="M39 502.8 l5 3 l5 -3 v8 l-5 3 l-5 -3 z" fill="#22CC44" />
<rect x="49" y="502.8" width="32" height="8" fill="#FFFFFF" stroke="#22CC44" stroke-width="0.6" rx="2" />
<rect x="51" y="504.8" width="24" height="1" fill="#888" />
<rect x="51" y="507.3" width="20" height="1" fill="#888" />
<path d="M39 514.3 l5 3 l5 -3 v8 l-5 3 l-5 -3 z" fill="#3366CC" />
<rect x="49" y="514.3" width="32" height="8" fill="#FFFFFF" stroke="#3366CC" stroke-width="0.6" rx="2" />
<rect x="51" y="516.3" width="24" height="1" fill="#888" />
<rect x="51" y="518.8" width="20" height="1" fill="#888" />
<path d="M83 491.3 l5 3 l5 -3 v8 l-5 3 l-5 -3 z" fill="#ED7D31" />
<rect x="93" y="491.3" width="32" height="8" fill="#FFFFFF" stroke="#ED7D31" stroke-width="0.6" rx="2" />
<rect x="95" y="493.3" width="24" height="1" fill="#888" />
<rect x="95" y="495.8" width="20" height="1" fill="#888" />
<path d="M83 502.8 l5 3 l5 -3 v8 l-5 3 l-5 -3 z" fill="#A5A5A5" />
<rect x="93" y="502.8" width="32" height="8" fill="#FFFFFF" stroke="#A5A5A5" stroke-width="0.6" rx="2" />
<rect x="95" y="504.8" width="24" height="1" fill="#888" />
<rect x="95" y="507.3" width="20" height="1" fill="#888" />
<path d="M83 514.3 l5 3 l5 -3 v8 l-5 3 l-5 -3 z" fill="#FFC000" />
<rect x="93" y="514.3" width="32" height="8" fill="#FFFFFF" stroke="#FFC000" stroke-width="0.6" rx="2" />
<rect x="95" y="516.3" width="24" height="1" fill="#888" />
<rect x="95" y="518.8" width="20" height="1" fill="#888" />
<text x="6.8" y="485.9" font-size="11.5" fill="#444" stroke="#444" stroke-width="0.3" textLength="12.2" lengthAdjust="spacingAndGlyphs">10</text>
<rect x="33" y="552.6" width="100" height="56" fill="#FFFFFF" />
<rect x="33" y="603.1" width="100" height="2.6" fill="#2F5597" />
<rect x="33" y="605.6" width="100" height="3" fill="#F2EA2A" />
<rect x="35" y="554.6" width="8" height="8" fill="#0F7BC9" />
<circle cx="39" cy="558.6" r="2" fill="#F2B320"/>
<rect x="63" y="556.6" width="45" height="1.3" fill="#777" />
<rect x="39" y="562.6" width="23" height="5" fill="#5B9BD5" stroke="#2F5597" stroke-width="0.5" />
<path d="M63 563.6 h5 v-1.5 l2.5 3 l-2.5 3 v-1.5 h-5z" fill="#CC2020" />
<rect x="49" y="568.6" width="2" height="7" fill="#CC2020" />
<path d="M47 574.6 l3 3 l3 -3z" fill="#CC2020" />
<rect x="73" y="563.6" width="35" height="1" fill="#AAA" />
<rect x="73" y="567.6" width="45" height="1" fill="#AAA" />
<path d="M38 578.6 h60 l10 6 l-10 6 h-60z" fill="#E6E8EC" />
<rect x="39" y="580.6" width="20" height="10" fill="#3868C0" />
<rect x="61" y="580.6" width="20" height="9" fill="#30B090" />
<rect x="83" y="580.6" width="18" height="10" fill="#50A040" />
<rect x="113" y="573.6" width="15" height="18" fill="#F8EAA0" stroke="#C8A840" stroke-width="0.6" rx="2" />
<rect x="37" y="592.6" width="85" height="0.8" fill="#999" />
<rect x="37" y="594.6" width="85" height="0.8" fill="#999" />
<rect x="37" y="596.6" width="85" height="0.8" fill="#999" />
<rect x="37" y="598.6" width="85" height="0.8" fill="#999" />
<text x="6.8" y="560.2" font-size="11.5" fill="#444" stroke="#444" stroke-width="0.3" textLength="12.2" lengthAdjust="spacingAndGlyphs">11</text>
<rect x="33" y="626.6" width="100" height="56" fill="#FFFFFF" />
<rect x="33" y="677.1" width="100" height="2.6" fill="#2F5597" />
<rect x="33" y="679.6" width="100" height="3" fill="#F2EA2A" />
<rect x="35" y="628.6" width="8" height="8" fill="#0F7BC9" />
<circle cx="39" cy="632.6" r="2" fill="#F2B320"/>
<rect x="71" y="631.6" width="40" height="1.3" fill="#444" />
<rect x="66" y="635.6" width="50" height="1.3" fill="#444" />
<path d="M50 650.6 h40 M70 644.6 v26 M53 644.6 v26 M88 644.6 v26" fill="none" stroke="#E07020" stroke-width="0.6" />
<rect x="41" y="640.6" width="14" height="6" fill="#FFC000" stroke="#555" stroke-width="0.4" rx="1" />
<rect x="63" y="640.6" width="14" height="6" fill="#F4B183" stroke="#555" stroke-width="0.4" rx="1" />
<rect x="58" y="654.6" width="14" height="6" fill="#ED7D31" stroke="#555" stroke-width="0.4" rx="1" />
<rect x="38" y="664.6" width="14" height="6" fill="#8FAADC" stroke="#555" stroke-width="0.4" rx="1" />
<rect x="63" y="666.6" width="14" height="6" fill="#FFC000" stroke="#555" stroke-width="0.4" rx="1" />
<rect x="91" y="640.6" width="14" height="6" fill="#A9D18E" stroke="#555" stroke-width="0.4" rx="1" />
<rect x="113" y="640.6" width="14" height="6" fill="#A9D18E" stroke="#555" stroke-width="0.4" rx="1" />
<rect x="103" y="654.6" width="14" height="6" fill="#ED7D31" stroke="#555" stroke-width="0.4" rx="1" />
<rect x="91" y="664.6" width="14" height="6" fill="#9DC3E6" stroke="#555" stroke-width="0.4" rx="1" />
<rect x="111" y="664.6" width="14" height="6" fill="#9DC3E6" stroke="#555" stroke-width="0.4" rx="1" />
<text x="6.8" y="634.2" font-size="11.5" fill="#444" stroke="#444" stroke-width="0.3" textLength="12.2" lengthAdjust="spacingAndGlyphs">12</text>
</svg>
<rect x="149.7" y="196.5" width="13" height="480.5" fill="#DCDCDC" />
<rect x="150" y="198" width="12.5" height="12.5" fill="#FFFFFF" />
<path d="M153 206 l3.2 -3.2 l3.2 3.2 z" fill="#666" />
<rect x="149.7" y="295" width="13" height="99" fill="#FFFFFF" />
<rect x="150" y="664" width="12.5" height="12.5" fill="#FFFFFF" />
<path d="M153 668.5 l3.2 3.2 l3.2 -3.2 z" fill="#666" />
<rect x="1061" y="196.5" width="15" height="480.5" fill="#DCDCDC" />
<rect x="1061.5" y="198" width="14" height="12.5" fill="#FFFFFF" />
<path d="M1065 206 l3.5 -3.5 l3.5 3.5 z" fill="#666" />
<rect x="1061.5" y="323.6" width="14" height="13.4" fill="#FFFFFF" />
<rect x="1061.5" y="617" width="14" height="12.5" fill="#FFFFFF" />
<path d="M1065 621 l3.5 3.5 l3.5 -3.5 z" fill="#666" />
<rect x="1059" y="631" width="18" height="46" fill="#E6E6E6" />
<path d="M1064.5 639 l4 -4 l4 4 z M1064.5 643 l4 -4 l4 4 z M1064.5 651 l4 4 l4 -4 z M1064.5 655 l4 4 l4 -4 z" fill="#6A6A6A" />
<rect x="203.5" y="204.5" width="821.5" height="461" fill="none" stroke="#D0D0D0" stroke-width="0.8" />
<rect x="3" y="677" width="1073" height="19" fill="#F3F3F3" />
<rect x="3" y="677" width="1073" height="0.8" fill="#DADADA" />
<text x="9.6" y="690.7" font-size="10.2" fill="#5A5A5A" stroke="#5A5A5A" stroke-width="0.1" textLength="47.9" lengthAdjust="spacingAndGlyphs">Slide 9 of 29</text>
<path d="M78 681 h5 v10 h-5 z M83 681 h6 v10 h-6" fill="none" stroke="#777" stroke-width="0.8" />
<path d="M84.5 684 l3 3 m0 -3 l-3 3" fill="none" stroke="#444" stroke-width="0.8" />
<text x="103.7" y="690.7" font-size="10.2" fill="#5A5A5A" stroke="#5A5A5A" stroke-width="0.1" textLength="72.3" lengthAdjust="spacingAndGlyphs">English (Indonesia)</text>
<circle cx="196" cy="686" r="4.5" fill="none" stroke="#555" stroke-width="0.9" stroke-dasharray="20 8"/>
<path d="M196 686 l-2 -3 M197 688 l5 5 m-5 0 l5 -5" fill="none" stroke="#444" stroke-width="0.9" />
<text x="205.3" y="690.7" font-size="10.2" fill="#5A5A5A" stroke="#5A5A5A" stroke-width="0.1" textLength="91.7" lengthAdjust="spacingAndGlyphs">Accessibility: Investigate</text>
<path d="M655 690 h9 M656 687.5 h7 M657 685 h5 M659.5 681.5 l-2.5 2 h5 z" fill="none" stroke="#777" stroke-width="0.9" />
<text x="668.0" y="690.7" font-size="10.2" fill="#5A5A5A" stroke="#5A5A5A" stroke-width="0.1" textLength="22.4" lengthAdjust="spacingAndGlyphs">Notes</text>
<path d="M707 681 h11.5 v8 h-7 l-3 3 v-3 h-1.5 z" fill="#666" />
<text x="721.0" y="690.7" font-size="10.2" fill="#5A5A5A" stroke="#5A5A5A" stroke-width="0.1" textLength="41.9" lengthAdjust="spacingAndGlyphs">Comments</text>
<rect x="779" y="677.8" width="33" height="18.2" fill="#D2D2D2" />
<rect x="790.5" y="681.5" width="10" height="9" fill="none" stroke="#6A6A6A" stroke-width="0.9" />
<rect x="793" y="683.5" width="5" height="3.5" fill="none" stroke="#6A6A6A" stroke-width="0.8" />
<rect x="824.5" y="681.5" width="4.5" height="4" fill="none" stroke="#777" stroke-width="0.8" />
<rect x="824.5" y="686.5" width="4.5" height="4" fill="none" stroke="#777" stroke-width="0.8" />
<rect x="830.0" y="681.5" width="4.5" height="4" fill="none" stroke="#777" stroke-width="0.8" />
<rect x="830.0" y="686.5" width="4.5" height="4" fill="none" stroke="#777" stroke-width="0.8" />
<rect x="857" y="681.5" width="11" height="9" fill="none" stroke="#777" stroke-width="0.8" />
<rect x="862.5" y="681.5" width="0.8" height="9" fill="#777" />
<rect x="858.5" y="684.5" width="2.5" height="0.7" fill="#777" />
<rect x="864.5" y="684.5" width="2.5" height="0.7" fill="#777" />
<rect x="858.5" y="686.5" width="2.5" height="0.7" fill="#777" />
<rect x="864.5" y="686.5" width="2.5" height="0.7" fill="#777" />
<rect x="858.5" y="688.5" width="2.5" height="0.7" fill="#777" />
<rect x="864.5" y="688.5" width="2.5" height="0.7" fill="#777" />
<path d="M890 681.5 h12 M891 681.5 v6 h10 v-6 M896 687.5 v3 M893.5 691.5 h5" fill="none" stroke="#777" stroke-width="0.9" />
<rect x="918" y="686" width="6" height="1" fill="#666" />
<rect x="928" y="686" width="82.5" height="1" fill="#777" />
<rect x="956.5" y="681.5" width="5" height="10" fill="#6A6A6A" />
<rect x="968.5" y="684" width="1" height="4" fill="#666" />
<path d="M1015 686.5 h7 M1018.5 683 v7" fill="none" stroke="#666" stroke-width="1" />
<text x="1031.0" y="690.7" font-size="10.2" fill="#5A5A5A" stroke="#5A5A5A" stroke-width="0.1" textLength="18.0" lengthAdjust="spacingAndGlyphs">77%</text>
<rect x="1062.5" y="681.5" width="10" height="10" fill="none" stroke="#888" stroke-width="0.8" />
<path d="M1063 682 l3 3 M1072 682 l-3 3 M1063 691 l3 -3 M1072 691 l-3 -3" fill="none" stroke="#888" stroke-width="0.8" />
<g stroke-width="1.1"><g id="slide">
<rect x="204" y="205" width="820" height="460" fill="#ffffff" />
<rect x="221.6" y="209.2" width="93.4" height="79.4" fill="#0D5E2C" />
<rect x="225.9" y="216" width="84.1" height="66.5" fill="#0F7BC9" />
<path d="M267.8 225.6 L285.6 243.2 Q285.8 244 285.6 245 L281.2 268 Q280.6 269.4 279 270 L269 272.8 Q267.8 273 266.6 272.8 L256.6 270 Q255 269.4 254.4 268 L250 245 Q249.8 244 250 243.2 Z" fill="#F1B321" />
<path d="M253 246 Q254 240 258 238 L260 250 L258.5 262 Q254 260 253 254 Z" fill="#3C2A18" />
<path d="M283 246 Q282 240 278 238 L276 250 L277.5 262 Q282 260 283 254 Z" fill="#3C2A18" />
<path d="M258 236 Q261 236 262.5 244 L263 258 L259.5 258 Q257 248 258 236 Z" fill="#F6EEDC" />
<path d="M278 236 Q275 236 273.5 244 L273 258 L276.5 258 Q279 248 278 236 Z" fill="#F6EEDC" />
<path d="M268 231.5 Q271.5 236 270 241 L266 241 Q264.5 236 268 231.5 Z" fill="#E03A22" />
<rect x="266.3" y="240.5" width="3.4" height="8" fill="#F6EEDC" />
<ellipse cx="268" cy="255" rx="5.2" ry="6.2" fill="#E2502A"/>
<path d="M264 253 h8 M264 256 h8" fill="none" stroke="#F0A070" stroke-width="0.7" />
<path d="M256 263 Q262 261 268 264 Q274 261 280 263 L278 266 Q272 264.5 268 267 Q264 264.5 258 266 Z" fill="#FBF2DE" />
<rect x="344.5" y="219.5" width="535" height="55" fill="#E2EFDA" stroke="#44729D" rx="9" vector-effect="non-scaling-stroke"/>
<text x="469.3" y="242.7" font-size="19" fill="#000" stroke="#000" stroke-width="0.3" textLength="285.7" lengthAdjust="spacingAndGlyphs" font-style="italic">Program Learning Outcomes (PLO)</text>
<text x="480.3" y="266.8" font-size="19" fill="#000" stroke="#000" stroke-width="0.3" textLength="263.4" lengthAdjust="spacingAndGlyphs">Program Studi Pariwisata Bahari</text>
<path d="M306.5 297.2 L588 297.2 Q600 297.2 600 309.2 L600 373.2 Q600 385.2 588 385.2 L306.5 385.2 Z" fill="#ffffff" stroke="#A8A8A8" vector-effect="non-scaling-stroke"/>
<rect x="305.5" y="297.2" width="2.6" height="88.0" fill="#A5A5A5" />
<path d="M308 410.8 L587 410.8 Q600 410.8 600 423.8 L600 477.8 Q600 490.8 587 490.8 L308 490.8 Z" fill="#ffffff" stroke="#C4842F" vector-effect="non-scaling-stroke"/>
<rect x="307" y="410.8" width="2.6" height="80.0" fill="#B86A0F" />
<path d="M308 519.6 L587 519.6 Q600 519.6 600 532.6 L600 586.8 Q600 599.8 587 599.8 L308 599.8 Z" fill="#ffffff" stroke="#C46A48" vector-effect="non-scaling-stroke"/>
<rect x="307" y="519.6" width="2.6" height="80.19999999999993" fill="#BE3C0C" />
<path d="M700.6 296.2 L954.2 296.2 Q967.2 296.2 967.2 309.2 L967.2 358.9 Q967.2 371.9 954.2 371.9 L700.6 371.9 Z" fill="#ffffff" stroke="#EE8A48" vector-effect="non-scaling-stroke"/>
<rect x="699.6" y="296.2" width="2.6" height="75.69999999999999" fill="#ED7D31" />
<path d="M701 400 L954.2 400 Q967.2 400 967.2 413 L967.2 462.2 Q967.2 475.2 954.2 475.2 L701 475.2 Z" fill="#ffffff" stroke="#B4B4B4" vector-effect="non-scaling-stroke"/>
<rect x="700" y="400" width="2.6" height="75.19999999999999" fill="#A5A5A5" />
<path d="M701 503.2 L954.2 503.2 Q967.2 503.2 967.2 516.2 L967.2 566 Q967.2 579 954.2 579 L701 579 Z" fill="#ffffff" stroke="#F6C63A" vector-effect="non-scaling-stroke"/>
<rect x="700" y="503.2" width="2.6" height="75.80000000000001" fill="#FFC000" />
<rect x="204" y="622" width="820" height="21" fill="#2F5597" />
<rect x="204.5" y="643.5" width="817.5" height="21.5" fill="#FFFF00" stroke="#6B6B2A" stroke-width="1" />
<path d="M221.2 300.7 L264.4 343.5 L307.6 300.7 L307.6 381.3 L264.4 423.5 L221.2 381.3 Z" fill="#A5A5A5" />
<path d="M224.7 408.2 L266.35 450.7 L308 408.2 L308 488.3 L266.35 530.8 L224.7 488.3 Z" fill="#B8690F" />
<path d="M220.8 519.4 L264.4 560.9 L308 519.4 L308 599.5 L264.4 642.0 L220.8 599.5 Z" fill="#BD3B0B" />
<path d="M619.2 295.6 L659.9000000000001 335.3 L700.6 295.6 L700.6 372.4 L659.9000000000001 412.5 L619.2 372.4 Z" fill="#ED7D31" />
<path d="M618.8 399.4 L659.95 439.3 L701.1 399.4 L701.1 476.4 L659.95 516.3 L618.8 476.4 Z" fill="#A5A5A5" />
<path d="M618.8 502.5 L659.9 542.4 L701.0 502.5 L701.0 578.5 L659.9 620.0 L618.8 578.5 Z" fill="#FFC000" />
<text x="230.2" y="370.5" font-size="26" fill="#111" stroke="#111" stroke-width="0.3" textLength="67.8" lengthAdjust="spacingAndGlyphs">PLO-1</text>
<text x="233.5" y="477.5" font-size="26" fill="#111" stroke="#111" stroke-width="0.3" textLength="69.0" lengthAdjust="spacingAndGlyphs">PLO-2</text>
<text x="230.3" y="588.7" font-size="26" fill="#111" stroke="#111" stroke-width="0.3" textLength="68.0" lengthAdjust="spacingAndGlyphs">PLO-3</text>
<text x="626.8" y="362.2" font-size="26" fill="#111" stroke="#111" stroke-width="0.3" textLength="66.7" lengthAdjust="spacingAndGlyphs">PLO-4</text>
<text x="625.7" y="466.3" font-size="26" fill="#111" stroke="#111" stroke-width="0.3" textLength="68.5" lengthAdjust="spacingAndGlyphs">PLO-5</text>
<text x="625.7" y="569.1" font-size="26" fill="#111" stroke="#111" stroke-width="0.3" textLength="68.5" lengthAdjust="spacingAndGlyphs">PLO-6</text>
<circle cx="319.6" cy="315.2" r="2.1" fill="#111"/>
<text x="327.5" y="319.3" font-size="12.5" fill="#111" stroke="#111" stroke-width="0.3" textLength="247.0" lengthAdjust="spacingAndGlyphs">Memiliki kemampuan pengetahuan dan</text>
<text x="327.5" y="336.5" font-size="12.5" fill="#111" stroke="#111" stroke-width="0.3" textLength="244.7" lengthAdjust="spacingAndGlyphs">keterampilan tentang konsep, teori dan</text>
<text x="327.5" y="353.0" font-size="12.5" fill="#111" stroke="#111" stroke-width="0.3" textLength="235.8" lengthAdjust="spacingAndGlyphs">aplikasi teknologi manajemen industri</text>
<text x="327.5" y="369.1" font-size="12.5" fill="#111" stroke="#111" stroke-width="0.3" textLength="233.5" lengthAdjust="spacingAndGlyphs">pariwisata bahari yang berkelanjutan.</text>
<circle cx="323.4" cy="427.5" r="2.7" fill="#111"/>
<text x="335.3" y="433.5" font-size="17" fill="#111" stroke="#111" stroke-width="0.3" textLength="178.1" lengthAdjust="spacingAndGlyphs">Memiliki kemampuan</text>
<text x="335.3" y="454.9" font-size="17" fill="#111" stroke="#111" stroke-width="0.3" textLength="250.4" lengthAdjust="spacingAndGlyphs">menganalisis ekowisata bahari</text>
<text x="335.3" y="478.0" font-size="17" fill="#111" stroke="#111" stroke-width="0.3" textLength="156.5" lengthAdjust="spacingAndGlyphs">yang berkelanjutan</text>
<circle cx="321.2" cy="540.2" r="2.3" fill="#111"/>
<text x="332.4" y="545.3" font-size="14" fill="#111" stroke="#111" stroke-width="0.3" textLength="228.6" lengthAdjust="spacingAndGlyphs">Memiliki jiwa kepemimpinan dan</text>
<text x="332.4" y="564.4" font-size="14" fill="#111" stroke="#111" stroke-width="0.3" textLength="252.2" lengthAdjust="spacingAndGlyphs">membentuk karakter kewirausahaan</text>
<text x="332.4" y="583.0" font-size="14" fill="#111" stroke="#111" stroke-width="0.3" textLength="185.9" lengthAdjust="spacingAndGlyphs">di bidang pariwisata bahari</text>
<circle cx="714.8" cy="305.3" r="2.4" fill="#111"/>
<text x="726.7" y="310.5" font-size="14.4" fill="#111" stroke="#111" stroke-width="0.3" textLength="148.7" lengthAdjust="spacingAndGlyphs">Memiliki kemampuan</text>
<text x="726.7" y="329.5" font-size="14.4" fill="#111" stroke="#111" stroke-width="0.3" textLength="214.3" lengthAdjust="spacingAndGlyphs">mengidentifikasi, menganalisis,</text>
<text x="726.7" y="347.8" font-size="14.4" fill="#111" stroke="#111" stroke-width="0.3" textLength="186.6" lengthAdjust="spacingAndGlyphs">merancang pengembangan</text>
<text x="726.7" y="365.8" font-size="14.4" fill="#111" stroke="#111" stroke-width="0.3" textLength="149.7" lengthAdjust="spacingAndGlyphs">ekonomi kemaritiman</text>
<circle cx="713.4" cy="419" r="1.9" fill="#111"/>
<text x="726.7" y="424.3" font-size="17" fill="#111" stroke="#111" stroke-width="0.3" textLength="158.3" lengthAdjust="spacingAndGlyphs">Memiliki kemampuan</text>
<text x="726.7" y="442.1" font-size="17" fill="#111" stroke="#111" stroke-width="0.3" textLength="221.5" lengthAdjust="spacingAndGlyphs">menganalisis dan merancang</text>
<text x="726.7" y="459.6" font-size="17" fill="#111" stroke="#111" stroke-width="0.3" textLength="217.4" lengthAdjust="spacingAndGlyphs">pemasaran pariwisata bahari</text>
<circle cx="713.4" cy="522.6" r="1.9" fill="#111"/>
<text x="726.7" y="528.4" font-size="17" fill="#111" stroke="#111" stroke-width="0.3" textLength="158.3" lengthAdjust="spacingAndGlyphs">Memiliki kemampuan</text>
<text x="726.7" y="545.6" font-size="17" fill="#111" stroke="#111" stroke-width="0.3" textLength="232.8" lengthAdjust="spacingAndGlyphs">mendesain rancangan MICE di</text>
<text x="726.7" y="563.2" font-size="17" fill="#111" stroke="#111" stroke-width="0.3" textLength="178.8" lengthAdjust="spacingAndGlyphs">sektor pariwisata bahari</text>
</g></g>
<defs><filter id="bl2" x="-20%" y="-20%" width="140%" height="140%"><feGaussianBlur stdDeviation="2"/></filter><filter id="bl1"><feGaussianBlur stdDeviation="1"/></filter><filter id="bl4" x="-30%" y="-30%" width="160%" height="160%"><feGaussianBlur stdDeviation="4"/></filter></defs>
<svg x="1145" y="96" width="160" height="90" viewBox="0 0 160 90" overflow="hidden">
<rect x="0" y="0" width="160" height="90" fill="#C6CAD0" />
<g filter="url(#bl1)">
<path d="M0 0 L160 0 L160 12 L97 13 L50 14 L22 15 L0 30 Z" fill="#E8E9EB" />
<rect x="97" y="13" width="51" height="77" fill="#C8C6C8" />
<rect x="148" y="0" width="12" height="90" fill="#BABABE" />
<rect x="0" y="30" width="20" height="60" fill="#C0C4CA" />
</g>
<path d="M97 13 L148 12.5" fill="none" stroke="#A8A8AC" stroke-width="0.8" />
<rect x="21" y="16" width="25" height="74" fill="#4A4038" />
<rect x="23" y="18" width="21" height="15" fill="#E8EAEE" />
<rect x="22.5" y="35" width="21.5" height="55" fill="#9A6A48" />
<rect x="46" y="18" width="5" height="72" fill="#D8DADC" />
<rect x="50" y="25" width="4" height="30" fill="#3A3A40" />
<g filter="url(#bl1)">
<path d="M50 90 L50 55 Q49 20 52 6 Q56 -2 70 -2 L92 -2 Q98 10 98 35 L99 50 Q115 56 132 66 Q140 76 141 90 Z" fill="#23283C" />
<path d="M54 32 Q54 2 72 2 Q88 4 89 26 L89 32 Z" fill="#E6CEC2" />
<path d="M54 28 Q70 22 90 30 Q91 44 80 52 Q70 58 60 50 Q54 42 54 28 Z" fill="#F3E3D3" />
<path d="M44 64 L52 62 L54 76 L46 78 Z" fill="#D8B030" />
<path d="M96 76 L118 70 L119 74 L97 80 Z M98 82 L119 77 L119 81 L99 86 Z" fill="#C8C8D4" />
<path d="M110 70 L118 68 L118 72 L111 73 Z" fill="#C8A830" />
</g>
<path d="M58 24 h7 M75 24 h7" fill="none" stroke="#3A2A28" stroke-width="1.2" />
<path d="M89 30 L97 22 M90 33 L97 26" fill="none" stroke="#E8E8EC" stroke-width="0.6" />
</svg>
<rect x="1145" y="166.3" width="94" height="20" fill="rgba(45,45,45,0.75)" />
<path d="M1153 171.3 a2.5 2.5 0 0 1 5 0 v5 a2.5 2.5 0 0 1 -5 0 z" fill="#E02F2F" />
<path d="M1151 175.3 a4.5 4.5 0 0 0 9 0 M1155.5 179.8 v3 M1153 182.8 h5" fill="none" stroke="#E02F2F" stroke-width="1" />
<path d="M1149 183.3 L1162 169.3" fill="none" stroke="#E02F2F" stroke-width="1.3" />
<text x="1167.3" y="180.6" font-size="12.3" fill="#F2F2F2" stroke="#F2F2F2" stroke-width="0.05" textLength="68.1" lengthAdjust="spacingAndGlyphs">Dina Sartika</text>
<rect x="1145" y="192" width="160" height="90" fill="#232323" />
<text x="1180.0" y="241.7" font-size="14.5" fill="#FFFFFF" stroke="#FFFFFF" stroke-width="0.2" textLength="88.5" lengthAdjust="spacingAndGlyphs" font-weight="bold">yadi mulyadi</text>
<rect x="1145" y="262.6" width="98.8" height="20" fill="rgba(45,45,45,0.75)" />
<path d="M1153 267.6 a2.5 2.5 0 0 1 5 0 v5 a2.5 2.5 0 0 1 -5 0 z" fill="#E02F2F" />
<path d="M1151 271.6 a4.5 4.5 0 0 0 9 0 M1155.5 276.1 v3 M1153 279.1 h5" fill="none" stroke="#E02F2F" stroke-width="1" />
<path d="M1149 279.6 L1162 265.6" fill="none" stroke="#E02F2F" stroke-width="1.3" />
<text x="1166.8" y="276.6" font-size="12.3" fill="#F2F2F2" stroke="#F2F2F2" stroke-width="0.05" textLength="73.2" lengthAdjust="spacingAndGlyphs">yadi mulyadi</text>
<svg x="1145" y="288" width="160" height="90" viewBox="0 0 160 90" overflow="hidden">
<rect x="0" y="0" width="160" height="90" fill="#D8CCC2" />
<g filter="url(#bl1)">
<rect x="0" y="0" width="82" height="60" fill="#DDD1C7" />
<path d="M0 42 L20 64 L80 64 L80 90 L0 90 Z" fill="#BCA898" />
<path d="M0 38 L20 61 L82 61 L82 65 L18 66 L0 46 Z" fill="#F8F0E8" />
<rect x="79" y="0" width="8" height="48" fill="#FAF4EE" />
<path d="M87 0 L110 0 L110 90 L87 90 Z" fill="#D6CCC4" />
<path d="M100 20 L108 16 L110 90 L98 90 Z" fill="#5A3A2A" />
<rect x="109" y="0" width="5" height="90" fill="#EAE2DC" />
<path d="M110 0 L120 0 L137 90 L124 90 Z" fill="#C07058" />
<path d="M120 0 L160 0 L160 90 L137 90 Z" fill="#E8DCD4" />
</g>
<path d="M125 36 L143 0" fill="none" stroke="#3A2A2A" stroke-width="0.8" />
<g filter="url(#bl1)"><circle cx="12" cy="29" r="3.2" fill="#FFFFFF"/><circle cx="57.5" cy="29" r="3.2" fill="#FFFFFF"/><circle cx="30" cy="54.5" r="2.6" fill="#FFFFFF"/><circle cx="4" cy="59" r="2" fill="#FFFFFF"/></g>
<g filter="url(#bl1)">
<path d="M47 90 Q47 52 52 44 Q58 36 70 36 Q86 36 90 50 L92 90 Z" fill="#6E7C96" />
<path d="M51 60 Q52 44 69 43 Q86 44 87 58 L87 90 L51 90 Z" fill="#E2BEB2" />
</g>
<path d="M56 61 h8 M73 61 h8" fill="none" stroke="#5A4038" stroke-width="1.3" />
</svg>
<rect x="1145" y="358.6" width="119.7" height="20" fill="rgba(45,45,45,0.75)" />
<path d="M1153 363.6 a2.5 2.5 0 0 1 5 0 v5 a2.5 2.5 0 0 1 -5 0 z" fill="#E02F2F" />
<path d="M1151 367.6 a4.5 4.5 0 0 0 9 0 M1155.5 372.1 v3 M1153 375.1 h5" fill="none" stroke="#E02F2F" stroke-width="1" />
<path d="M1149 375.6 L1162 361.6" fill="none" stroke="#E02F2F" stroke-width="1.3" />
<text x="1167.0" y="372.3" font-size="12.3" fill="#F2F2F2" stroke="#F2F2F2" stroke-width="0.05" textLength="93.9" lengthAdjust="spacingAndGlyphs">Atikah Nurhayati</text>
<defs><linearGradient id="spk" x1="0" y1="0" x2="0" y2="1"><stop offset="0" stop-color="#E8F07A"/><stop offset="0.5" stop-color="#7DD23A"/><stop offset="1" stop-color="#E8F07A"/></linearGradient></defs>
<rect x="1141" y="380" width="167.7" height="98" fill="url(#spk)" />
<rect x="1143" y="382" width="163.7" height="94" fill="#F0F09A" />
<svg x="1145" y="384" width="160" height="90" viewBox="0 0 160 90" overflow="hidden">
<rect x="0" y="0" width="160" height="90" fill="#DCE0E3" />
<rect x="0" y="0" width="160" height="20" fill="#E2E6E8" filter="url(#bl2)"/>
<g filter="url(#bl1)">
<path d="M25 90 Q30 75 55 72 L100 72 Q125 76 135 90 Z" fill="#3A3E44" />
<path d="M50 76 Q49 30 58 19 Q70 12 84 14 Q98 20 100 50 L102 76 Z" fill="#2C3244" />
<path d="M52 40 L58 40 L62 76 L51 76 Z" fill="#5E7C9C" />
<path d="M96 62 L106 66 L112 76 L97 76 Z" fill="#5878A0" />
<path d="M60 42 Q62 29 78 28 Q94 29 96 44 L97 60 Q94 72 80 72 Q64 72 60 60 Z" fill="#D6B09A" />
</g>
<path d="M64 47 q4 -1.5 8 0 M80 43 q4 -1.5 8 0" fill="none" stroke="#5A4038" stroke-width="1" />
<path d="M75 63 q5 2 11 -1" fill="none" stroke="#9A5048" stroke-width="1.6" />
</svg>
<rect x="1145" y="454" width="150.6" height="20" fill="rgba(45,45,45,0.75)" />
<text x="1149.3" y="469.0" font-size="12.3" fill="#F2F2F2" stroke="#F2F2F2" stroke-width="0.05" textLength="142.4" lengthAdjust="spacingAndGlyphs">R Funny Mustikasari Elita</text>
<svg x="1145" y="480" width="160" height="90" viewBox="0 0 160 90" overflow="hidden">
<rect x="0" y="0" width="160" height="90" fill="#D8D0C2" />
<g filter="url(#bl1)">
<rect x="0" y="0" width="26" height="90" fill="#E2DACA" />
<rect x="1" y="0" width="3" height="30" fill="#505058" />
<rect x="21" y="0" width="3" height="90" fill="#C8C0B0" />
<path d="M118 22 L142 0 L160 0 L160 90 L120 90 Z" fill="#E0E2DE" />
<path d="M143 0 L160 0 L160 35 L143 38 Z" fill="#A8ACAC" />
<rect x="148" y="37" width="12" height="30" fill="#F0F2F2" />
<rect x="93" y="45" width="20" height="20" fill="#2E2E30" />
</g>
<path d="M124 34 L146 26 L148 66 L125 66 Z" fill="#F0F2F4" stroke="#9AA8B4" stroke-width="0.8" />
<g filter="url(#bl1)">
<circle cx="138" cy="24" r="2.5" fill="#5AA0D8"/>
<path d="M121 72 Q128 68 136 74 L137 90 L121 90 Z" fill="#3A3030" />
<path d="M36 90 Q40 68 58 60 L100 58 Q118 62 126 90 Z" fill="#C8C0C4" />
<path d="M100 58 Q116 64 124 80 L118 84 Q108 68 98 66 Z" fill="#A83848" />
<path d="M40 76 Q48 64 58 62 L60 68 Q50 72 44 82 Z" fill="#E8E0E4" />
<path d="M50 72 Q50 30 58 19 Q70 14 82 16 Q92 22 94 50 L94 72 Z" fill="#C28088" />
<path d="M56 40 Q58 28 72 28 Q86 29 88 42 L88 56 Q84 68 72 68 Q60 68 57 56 Z" fill="#CCA48C" />
<path d="M52 50 L58 50 L62 74 L50 74 Z" fill="#B84858" />
</g>
<path d="M57 38 h30" fill="none" stroke="#4A4040" stroke-width="1.2" />
<path d="M66 55 q5 1 10 0" fill="none" stroke="#7A4A40" stroke-width="1" />
</svg>
<rect x="1145" y="550.6" width="106.3" height="20" fill="rgba(45,45,45,0.75)" />
<path d="M1153 555.6 a2.5 2.5 0 0 1 5 0 v5 a2.5 2.5 0 0 1 -5 0 z" fill="#E02F2F" />
<path d="M1151 559.6 a4.5 4.5 0 0 0 9 0 M1155.5 564.1 v3 M1153 567.1 h5" fill="none" stroke="#E02F2F" stroke-width="1" />
<path d="M1149 567.6 L1162 553.6" fill="none" stroke="#E02F2F" stroke-width="1.3" />
<text x="1167.0" y="564.8" font-size="12.3" fill="#F2F2F2" stroke="#F2F2F2" stroke-width="0.05" textLength="80.3" lengthAdjust="spacingAndGlyphs">INE MAULINA</text>
<rect x="1145" y="576" width="160" height="90" fill="#000000" />
<rect x="1145" y="646.7" width="96.6" height="20" fill="rgba(45,45,45,0.75)" />
<path d="M1153 651.7 a2.5 2.5 0 0 1 5 0 v5 a2.5 2.5 0 0 1 -5 0 z" fill="#E02F2F" />
<path d="M1151 655.7 a4.5 4.5 0 0 0 9 0 M1155.5 660.2 v3 M1153 663.2 h5" fill="none" stroke="#E02F2F" stroke-width="1" />
<path d="M1149 663.7 L1162 649.7" fill="none" stroke="#E02F2F" stroke-width="1.3" />
<text x="1167.0" y="660.5" font-size="12.3" fill="#F2F2F2" stroke="#F2F2F2" stroke-width="0.05" textLength="70.6" lengthAdjust="spacingAndGlyphs">Mutia Utami</text>
</svg>
</body></html>
